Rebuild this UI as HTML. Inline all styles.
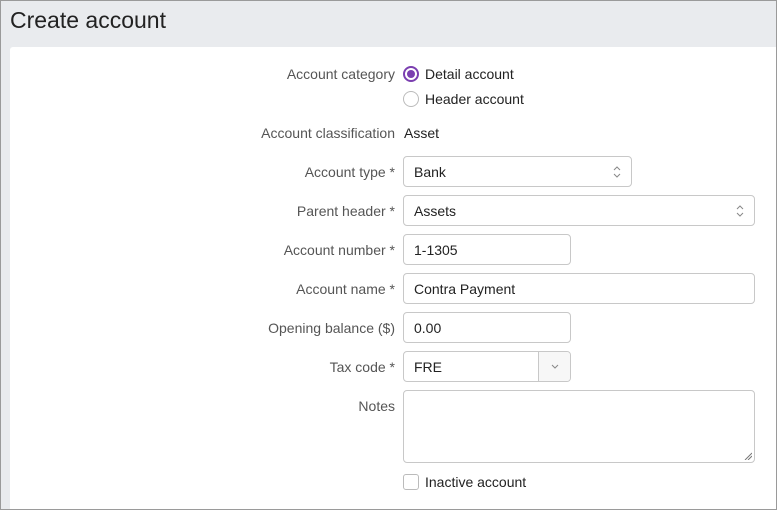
<!DOCTYPE html>
<html><head><style>
*{box-sizing:border-box;margin:0;padding:0}
body{width:777px;height:510px;overflow:hidden;background:#e9ebee;font-family:"Liberation Sans",sans-serif;font-size:14px;color:#333;position:relative}
.frame{position:absolute;left:0;top:0;width:777px;height:510px;border:1px solid #9a9a9a}
h1{position:absolute;left:10px;top:7px;font-weight:normal;font-size:23px;color:#222}
.card{position:absolute;left:10px;top:47px;width:766px;height:462px;background:#fff;border-radius:3px 0 0 0}
.lbl{position:absolute;right:382px;color:#555;white-space:nowrap}
.val{position:absolute;left:414px;color:#222}
.box{position:absolute;left:403px;height:31px;border:1px solid #c8c8c8;border-radius:4px;background:#fff;padding:7px 10px;color:#222}
.ud{position:absolute;right:10px;top:8px;width:8px;height:14px}
.radio{position:absolute;left:403px;width:16px;height:16px;border-radius:50%;border:1.5px solid #bbb;background:#fff}
.radio.on{border:2px solid #7b3fb0}
.radio.on:after{content:"";position:absolute;left:2px;top:2px;width:8px;height:8px;border-radius:50%;background:#7b3fb0}
</style></head><body>
<h1>Create account</h1>
<div class="card"></div>
<div class="frame"></div>

<div class="lbl" style="top:66px">Account category</div>
<div class="radio on" style="top:66px"></div><div class="val" style="left:425px;top:66px">Detail account</div>
<div class="radio" style="top:91px"></div><div class="val" style="left:425px;top:91px">Header account</div>

<div class="lbl" style="top:125px">Account classification</div>
<div class="val" style="left:404px;top:125px">Asset</div>

<div class="lbl" style="top:164px">Account type *</div>
<div class="box" style="top:156px;width:229px">Bank<svg class="ud" viewBox="0 0 8 14"><path d="M1 5 4 2 7 5M1 9 4 12 7 9" fill="none" stroke="#888" stroke-width="1"/></svg></div>

<div class="lbl" style="top:203px">Parent header *</div>
<div class="box" style="top:195px;width:352px">Assets<svg class="ud" viewBox="0 0 8 14"><path d="M1 5 4 2 7 5M1 9 4 12 7 9" fill="none" stroke="#888" stroke-width="1"/></svg></div>

<div class="lbl" style="top:242px">Account number *</div>
<div class="box" style="top:234px;width:168px">1-1305</div>

<div class="lbl" style="top:281px">Account name *</div>
<div class="box" style="top:273px;width:352px">Contra Payment</div>

<div class="lbl" style="top:320px">Opening balance ($)</div>
<div class="box" style="top:312px;width:168px">0.00</div>

<div class="lbl" style="top:359px">Tax code *</div>
<div class="box" style="top:351px;width:168px">FRE<div style="position:absolute;right:0;top:0;width:32px;height:29px;border-left:1px solid #c8c8c8;background:#f7f7f7;border-radius:0 3px 3px 0"><svg style="position:absolute;left:12px;top:12px" width="8" height="5" viewBox="0 0 8 5"><path d="M1 1 4 4 7 1" fill="none" stroke="#888"/></svg></div></div>

<div class="lbl" style="top:398px">Notes</div>
<div class="box" style="top:390px;width:352px;height:73px"><svg style="position:absolute;right:2px;bottom:2px" width="8" height="8"><path d="M1 8 8 1M4 8 8 4" stroke="#777"/></svg></div>

<div style="position:absolute;left:403px;top:474px;width:16px;height:16px;border:1.5px solid #bbb;border-radius:3px;background:#fff"></div>
<div class="val" style="left:425px;top:474px">Inactive account</div>
</body></html>
